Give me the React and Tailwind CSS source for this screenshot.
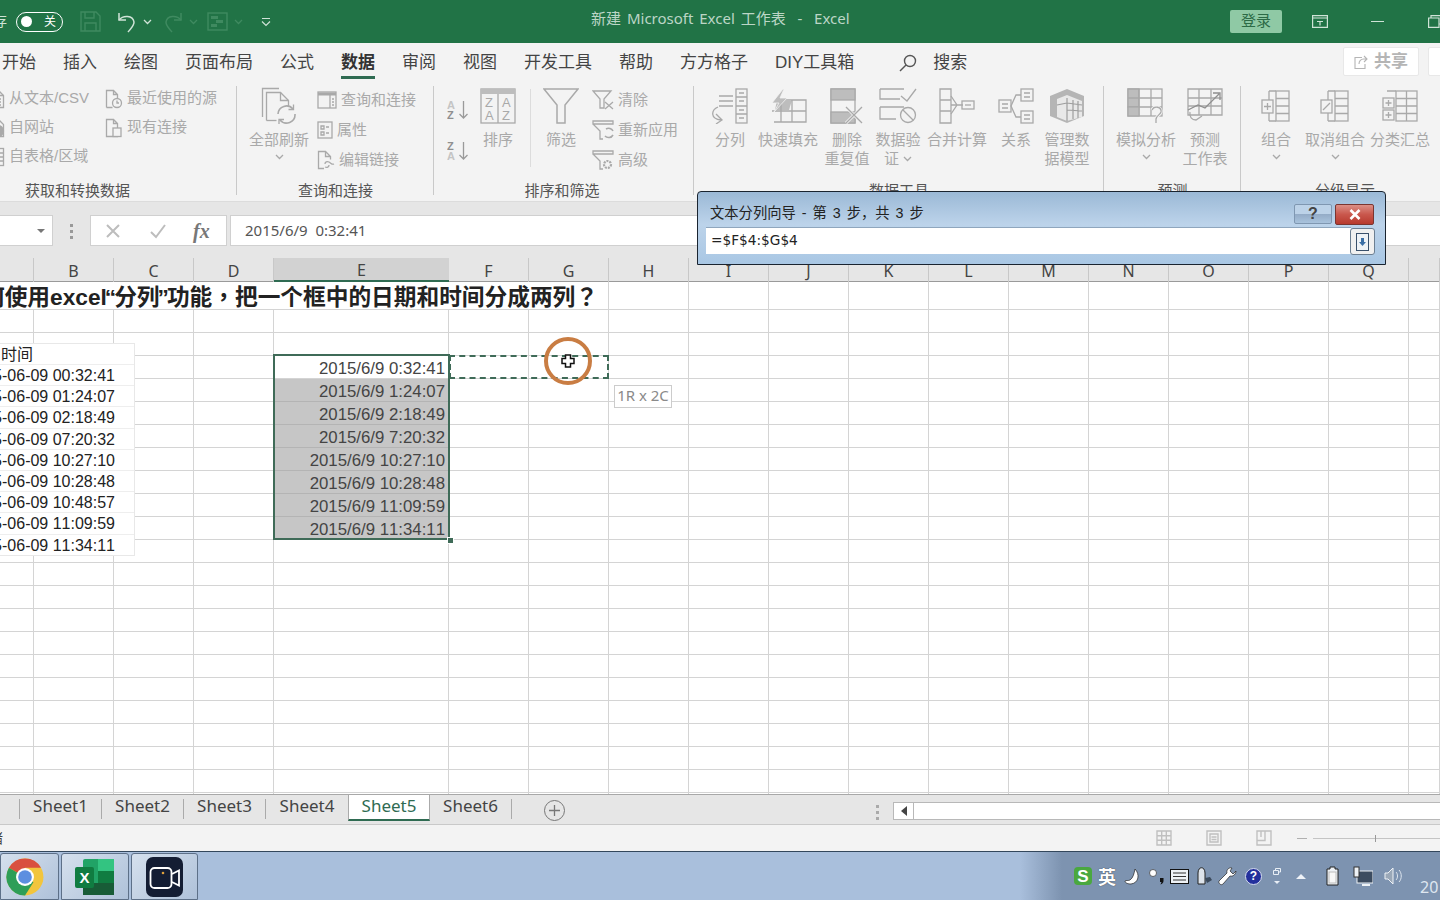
import React from "react";

const G = "#a9a9a9";
const F = "[font-family:'Liberation_Sans','Noto_Sans_CJK_SC',sans-serif]";

const S = ({ w, h, vb, children, className = "", c = G, sw = 1.3 }) => (
  <svg width={w} height={h} viewBox={vb || `0 0 ${w} ${h}`} fill="none" stroke={c} strokeWidth={sw} className={`shrink-0 ${className}`}>
    {children}
  </svg>
);

const Chev = ({ c = "#a9a9a9" }) => (
  <svg width="9" height="6" viewBox="0 0 9 6" fill="none" stroke={c} strokeWidth="1.3" className="shrink-0"><path d="M1 1l3.5 3.5L8 1" /></svg>
);

/* ---------- ribbon icons ---------- */
const I = {
  csv: (
    <S w={16} h={20} className="-ml-[11px]"><path d="M1.500 1.500h8l5 5v12h-13z" /><path d="M9.500 1.500v5h5M6 10h6M6 13h6M6 16h6" /></S>
  ),
  web: (
    <S w={16} h={20} className="-ml-[11px]"><path d="M1.500 1.500h8l5 5v12h-13z" /><circle cx="9" cy="13" r="5.500" fill="#a9a9a9" /></S>
  ),
  tbl: (
    <S w={16} h={20} className="-ml-[11px]"><rect x="1.500" y="1.500" width="13" height="17" /><path d="M1.500 6h13M1.500 10h13M1.500 14h13M8 1.500v17" /></S>
  ),
  recent: (
    <S w={18} h={20}><path d="M1.5 18.5v-17h7l4 4v4M1.5 18.5h6M8.5 1.5v4h4" /><circle cx="12" cy="14" r="4.5" /><path d="M12 11.5V14h2" /></S>
  ),
  existing: (
    <S w={18} h={20}><path d="M1.5 18.5v-17h7l4 4v13zM8.5 1.5v4h4" /><rect x="8" y="10" width="8" height="8.5" fill="#f3f3f3" /></S>
  ),
  refresh: (
    <S w={36} h={38}>
      <path d="M1.5 30V1.5H18" /><path d="M5.5 33.5V5.5h14l8 8v6" /><path d="M19.5 5.5v8h8" /><path d="M5.5 33.5h10" />
      <path d="M17 27a8.5 8.5 0 0 1 15-5M34 27a8.5 8.5 0 0 1-15 6" strokeWidth="1.6" /><path d="M32.5 17.5v5h-5M18 37v-4.500h5" />
    </S>
  ),
  panel: (
    <S w={20} h={18}><rect x="1" y="1" width="18" height="16" /><path d="M1 3h18" strokeWidth="3" /><path d="M13 3v14M15 8h2M15 11h2M15 14h2" /></S>
  ),
  props: (
    <S w={16} h={18}><rect x="1" y="1" width="14" height="16" /><path d="M4 5h3v3H4zM4 11h3v3H4zM9 6h3M9 12h3" /></S>
  ),
  links: (
    <S w={18} h={20}><path d="M7 18.500H1.500v-17h7l5 5v3M8.500 1.500v5h5" /><path d="M8 14c0-2 2-3 4-2s3 3 5 2M8 17c2 1 4 0 4-2" /></S>
  ),
  az: (
    <svg width="22" height="22" viewBox="0 0 22 22" className="shrink-0">
      <text x="0" y="9.500" fontSize="11" fontFamily="Liberation Sans" fontWeight="700" fill="#c4c4c4">A</text>
      <text x="0" y="20" fontSize="11" fontFamily="Liberation Sans" fontWeight="700" fill="#8f8f8f">Z</text>
      <path d="M16.500 2v17M12.500 15l4 4 4-4" fill="none" stroke="#9a9a9a" strokeWidth="1.300" />
    </svg>
  ),
  za: (
    <svg width="22" height="22" viewBox="0 0 22 22" className="shrink-0">
      <text x="0" y="9.500" fontSize="11" fontFamily="Liberation Sans" fontWeight="700" fill="#8f8f8f">Z</text>
      <text x="0" y="20" fontSize="11" fontFamily="Liberation Sans" fontWeight="700" fill="#c4c4c4">A</text>
      <path d="M16.500 2v17M12.500 15l4 4 4-4" fill="none" stroke="#9a9a9a" strokeWidth="1.300" />
    </svg>
  ),
  sort: (
    <svg width="36" height="36" viewBox="0 0 36 36" className="shrink-0">
      <rect x="1" y="1" width="34" height="34" fill="#f3f3f3" stroke="#a9a9a9" strokeWidth="1.300" />
      <rect x="1" y="1" width="34" height="5" fill="#bdbdbd" />
      <path d="M18 6v29" stroke="#a9a9a9" strokeWidth="1.300" />
      <g fontSize="13" fontFamily="Liberation Sans" fill="#a9a9a9">
        <text x="5" y="19">Z</text><text x="5" y="32">A</text><text x="22" y="19">A</text><text x="22" y="32">Z</text>
      </g>
    </svg>
  ),
  funnel: (
    <S w={36} h={36} sw={1.5}><path d="M1 1h34L22 17v18h-8V17z" /></S>
  ),
  fClear: (
    <S w={22} h={20}><path d="M1 1h18l-7 8v9l-4 0V9z" /><path d="M13 12l8 7M21 12l-8 7" /></S>
  ),
  fRe: (
    <S w={22} h={20}><path d="M1 1h20v3H1zM1 4l7 7v8h3" /><path d="M14 9a5 5 0 0 1 7 2M21 15a5 5 0 0 1-8 1" strokeWidth="1.600" /></S>
  ),
  fAdv: (
    <S w={22} h={20}><path d="M1 1h20v3H1zM1 4l7 7v8h3" /><circle cx="15.500" cy="14.500" r="3.500" strokeWidth="2.200" strokeDasharray="2 1" /></S>
  ),
  split: (
    <S w={40} h={36}>
      <path d="M9 8h14M9 13h14M9 18h14" />
      <rect x="26" y="1" width="11" height="34" /><path d="M26 9h11M26 18h11M26 26h11M29 5h5M29 13h5M29 22h5M29 30h5" />
      <path d="M8 19C1 22 0 31 11 32M6 26l6 6-6 4" />
    </S>
  ),
  flash: (
    <svg width="38" height="36" viewBox="0 0 38 36" className="shrink-0" fill="none" stroke="#a9a9a9" strokeWidth="1.300">
      <path d="M8 12h29v22H5" /><path d="M8 12h15l-3 10H6z" fill="#bdbdbd" stroke="none" /><path d="M23 12v22M37 23H3M12 12v22" />
      <path d="M14 1L3 15h7L5 24 18 10h-7l4-9z" fill="#bdbdbd" stroke="#f3f3f3" strokeWidth="0.800" />
    </svg>
  ),
  del: (
    <svg width="34" height="36" viewBox="0 0 34 36" className="shrink-0" fill="none" stroke="#a9a9a9" strokeWidth="1.300">
      <rect x="1" y="1" width="24" height="34" />
      <rect x="1" y="1" width="24" height="11" fill="#bdbdbd" /><rect x="1" y="24" width="24" height="11" fill="#bdbdbd" />
      <path d="M16 19l16 16M32 19L16 35" stroke="#f3f3f3" strokeWidth="3" /><path d="M16 19l16 16M32 19L16 35" />
    </svg>
  ),
  valid: (
    <S w={38} h={36}>
      <path d="M1 1h24M1 1v10h20M1 19h24M1 19v12h16M25 19" />
      <path d="M22 8l6 5 9-12" />
      <circle cx="29" cy="27" r="7.500" /><path d="M24 22l10 10" />
    </S>
  ),
  merge: (
    <S w={36} h={36}>
      <path d="M1 1h11v11H1zM1 12h11v11H1zM1 23h11v12H1z" />
      <path d="M12 8l6 9-6 9M12 17h12" />
      <rect x="23" y="13" width="12" height="8" /><path d="M26 17h6" />
    </S>
  ),
  rel: (
    <S w={36} h={36}>
      <rect x="1" y="12" width="12" height="12" /><path d="M4 16h6M4 20h6" />
      <rect x="23" y="1" width="12" height="12" /><path d="M26 5h6M26 9h6" />
      <rect x="23" y="23" width="12" height="12" /><path d="M26 27h6M26 31h6" />
      <path d="M23 7l-5 0-5 11 5 11h5" />
    </S>
  ),
  model: (
    <svg width="36" height="36" viewBox="0 0 36 36" className="shrink-0" fill="none">
      <path d="M1 8L18 1l17 7v20l-17 7-17-7z" fill="#b5b5b5" />
      <path d="M8 11l10-4 15 6v16l-15 4-10-4z" fill="#e8e8e8" />
      <path d="M18 10v23M24 12v19M29 13v17M18 15l15 2M18 22l15 1M8 17l10-2" stroke="#9d9d9d" strokeWidth="1.200" />
    </svg>
  ),
  whatif: (
    <svg width="38" height="36" viewBox="0 0 38 36" className="shrink-0" fill="none" stroke="#a9a9a9" strokeWidth="1.300">
      <rect x="1" y="1" width="34" height="27" />
      <path d="M1 1h11v18H1z" fill="#bdbdbd" /><path d="M1 10h34M1 19h34M12 1v27M24 1v27" /><rect x="1" y="19" width="11" height="9" fill="#bdbdbd" />
      <path d="M25 22c2-5 10-3 9 2-1 3-4 3-5 7v4" stroke="#f3f3f3" strokeWidth="3" /><path d="M25 22c2-5 10-3 9 2-1 3-4 3-5 7v4" />
    </svg>
  ),
  fore: (
    <S w={36} h={36}>
      <path d="M1 1h34v26H1zM12 1v26M24 1v26M1 10h34M1 18h34" /><path d="M1 22l10-5 7 3 14-14M26 5h7v7" stroke="#8f8f8f" />
      <path d="M3 24c-1 5 2 8 6 8l6-4" />
    </S>
  ),
  grp: (
    <S w={30} h={32}>
      <rect x="15" y="1" width="13" height="30" /><path d="M15 8.500h13M15 16h13M15 23.500h13M8 1h7M8 31h7M8 1v9M8 23v8" />
      <rect x="1" y="10" width="11" height="13" /><path d="M6.500 13v7M3 16.500h7" />
    </S>
  ),
  ungrp: (
    <S w={30} h={32}>
      <rect x="15" y="1" width="13" height="30" /><path d="M15 8.500h13M15 16h13M15 23.500h13M8 1h7M8 31h7M8 1v9M8 23v8" />
      <rect x="1" y="10" width="11" height="13" /><path d="M3 20l7-7" />
    </S>
  ),
  sub: (
    <S w={36} h={32}>
      <rect x="14" y="1" width="21" height="30" /><path d="M14 8.500h21M14 16h21M14 23.500h21M24.500 1v30M5 1h9" />
      <rect x="1" y="8" width="11" height="10" /><path d="M6.500 10v6M3.500 13h6" /><rect x="1" y="20" width="11" height="10" /><path d="M6.500 22v6M3.500 25h6" />
    </S>
  ),
};

const Item = ({ icon, label, h = "h-[29px]" }) => (
  <div className={`flex items-center ${h} text-[15px] text-[#a9a9a9] whitespace-nowrap`}>
    {icon}
    <span className="ml-1">{label}</span>
  </div>
);

const Big = ({ w, icon, lines, chev, chevInline }) => (
  <div className={`flex flex-col items-center shrink-0 ${w}`}>
    <div className="h-[38px] flex items-center justify-center mt-[7px]">{icon}</div>
    <div className="mt-[5px] text-[15px] leading-[19px] text-[#a9a9a9] text-center whitespace-nowrap">
      {lines.map((l, i) => (
        <div key={l} className="flex items-center justify-center gap-1">
          {l}
          {chevInline && i === lines.length - 1 ? <Chev /> : null}
        </div>
      ))}
    </div>
    {chev ? <div className="mt-[5px]"><Chev /></div> : null}
  </div>
);

const Group = ({ w, sep = true, caption, capClass = "text-center", children, pl = "" }) => (
  <div className={`${w} h-full shrink-0 flex flex-col relative`}>
    <div className={`flex-1 flex min-h-0 ${pl}`}>{children}</div>
    <div className={`h-[21px] text-[15px] leading-[22px] text-[#555] whitespace-nowrap ${capClass}`}>{caption}</div>
    {sep ? <div className="absolute right-0 top-[6px] bottom-[6px] w-px bg-[#c9c9c9]" /> : null}
  </div>
);

const Ribbon = () => (
  <div className="h-[122px] bg-[#f3f3f3] border-b border-[#dcdcdc] flex shrink-0 overflow-hidden">
    <Group w="w-[237px]" caption="获取和转换数据" capClass="pl-[25px]">
      <div className="flex flex-col w-[105px] pt-[4px]">
        <Item icon={I.csv} label="从文本/CSV" />
        <Item icon={I.web} label="自网站" />
        <Item icon={I.tbl} label="自表格/区域" />
      </div>
      <div className="flex flex-col pt-[4px]">
        <Item icon={I.recent} label="最近使用的源" />
        <Item icon={I.existing} label="现有连接" />
      </div>
    </Group>
    <Group w="w-[197px]" caption="查询和连接">
      <Big w="w-[84px] -mr-[4px]" icon={I.refresh} lines={["全部刷新"]} chev />
      <div className="flex flex-col pt-[5px]">
        <Item h="h-[30px]" icon={I.panel} label="查询和连接" />
        <Item h="h-[30px]" icon={I.props} label="属性" />
        <Item h="h-[30px]" icon={I.links} label="编辑链接" />
      </div>
    </Group>
    <Group w="w-[260px]" caption="排序和筛选" capClass="text-center pr-[4px]">
      <div className="flex flex-col gap-[19px] pl-[13px] pt-[19px] w-[46px]">
        {I.az}
        {I.za}
      </div>
      <Big w="w-[36px]" icon={I.sort} lines={["排序"]} />
      <div className="w-px h-[78px] bg-[#dcdcdc] ml-[14px] mt-[9px]" />
      <Big w="w-[60px]" icon={I.funnel} lines={["筛选"]} />
      <div className="flex flex-col pt-[5px] pl-[1px]">
        <Item h="h-[30px]" icon={I.fClear} label="清除" />
        <Item h="h-[30px]" icon={I.fRe} label="重新应用" />
        <Item h="h-[30px]" icon={I.fAdv} label="高级" />
      </div>
    </Group>
    <Group w="w-[410px]" caption="数据工具" pl="pl-[12px]">
      <Big w="w-[48px]" icon={I.split} lines={["分列"]} />
      <Big w="w-[68px]" icon={I.flash} lines={["快速填充"]} />
      <Big w="w-[50px]" icon={I.del} lines={["删除", "重复值"]} />
      <Big w="w-[52px]" icon={I.valid} lines={["数据验", "证"]} chevInline />
      <Big w="w-[66px]" icon={I.merge} lines={["合并计算"]} />
      <Big w="w-[52px]" icon={I.rel} lines={["关系"]} />
      <Big w="w-[50px]" icon={I.model} lines={["管理数", "据模型"]} />
    </Group>
    <Group w="w-[137px]" caption="预测" pl="pl-[7px]">
      <Big w="w-[70px]" icon={I.whatif} lines={["模拟分析"]} chev />
      <Big w="w-[48px]" icon={I.fore} lines={["预测", "工作表"]} />
    </Group>
    <Group w="w-[208px]" sep={false} caption="分级显示" pl="pl-[6px]">
      <Big w="w-[58px]" icon={I.grp} lines={["组合"]} chev />
      <Big w="w-[60px]" icon={I.ungrp} lines={["取消组合"]} chev />
      <Big w="w-[70px]" icon={I.sub} lines={["分类汇总"]} />
    </Group>
  </div>
);

/* ---------- title bar ---------- */
const Q = "#3f8a60";
const TitleBar = () => (
  <div className="h-[43px] bg-[#217346] flex items-center shrink-0 text-white overflow-hidden relative">
    <span className="text-[14px] w-[16px] -ml-[7px] shrink-0 text-[#cfe3d7]">存</span>
    <div className="ml-[7px] w-[47px] h-[20px] rounded-full border border-white flex items-center justify-between px-[3px] shrink-0">
      <span className="w-[11px] h-[11px] rounded-full bg-white ml-[1px]" />
      <span className="text-[12px] leading-none mr-[3px]">关</span>
    </div>
    <S w={21} h={21} c={Q} sw={1.4} className="ml-[17px]"><path d="M1 1h15l4 4v15H1z" /><path d="M5 1v6h9V1M5 20v-8h11v8" /></S>
    <S w={20} h={22} c="#cfe3d7" sw={1.5} className="ml-[16px]"><path d="M2 2v7h7" /><path d="M2 9c4-5 14-5 15 2 0 4-3 6-6 10" /></S>
    <span className="ml-[6px]"><Chev c="#cfe3d7" /></span>
    <S w={20} h={22} c={Q} sw={1.5} className="ml-[11px] -scale-x-100"><path d="M2 2v7h7" /><path d="M2 9c4-5 14-5 15 2 0 4-3 6-6 10" /></S>
    <span className="ml-[6px]"><Chev c={Q} /></span>
    <svg width="21" height="19" viewBox="0 0 21 19" className="ml-[9px] shrink-0"><rect x="1" y="1" width="19" height="17" fill="none" stroke={Q} strokeWidth="1.400" /><path d="M4 4h7v3H4zM9 8h7v3H9zM4 12h6v3H4z" fill={Q} /></svg>
    <span className="ml-[6px]"><Chev c={Q} /></span>
    <svg width="10" height="10" viewBox="0 0 10 10" fill="none" stroke="#cfe3d7" strokeWidth="1.200" className="ml-[18px] shrink-0"><path d="M1 1.500h8M1 4.500l4 4 4-4" /></svg>
    <div className="absolute left-[591px] top-[8px] text-[15px] leading-[20px] [word-spacing:2px] text-[#bcd6c6] whitespace-pre [font-family:'Noto_Sans','Noto_Sans_CJK_SC',sans-serif]">新建 Microsoft Excel 工作表  -  Excel</div>
    <div className="ml-auto flex items-center shrink-0 -mr-[4px]">
      <div className="w-[52px] h-[23px] rounded-[2px] bg-[#8fc9a5] text-[#2c6a46] text-[15px] flex items-center justify-center">登录</div>
      <S w={16} h={13} c="#cfe3d7" sw={1.2} className="ml-[30px]"><path d="M.6.6h14.800v11.800H.6zM.6 3h14.800M5 6.500h6M8 6.500v4" /></S>
      <div className="w-[13px] h-px bg-[#cfe3d7] ml-[43px]" />
      <S w={16} h={13} c="#cfe3d7" sw={1.2} className="ml-[44px]"><path d="M3 3V.6h10.400V9H11M.6 3h10.400v9.400H.6z" /></S>
    </div>
  </div>
);

/* ---------- tabs ---------- */
const TabRow = () => (
  <div className="h-[37px] bg-[#f3f3f3] flex items-center shrink-0 pl-[2px] pt-[2px] gap-[27px] text-[17px] text-[#444] whitespace-nowrap">
    {["开始", "插入", "绘图", "页面布局", "公式"].map((t) => <span key={t}>{t}</span>)}
    <span className="relative font-bold text-[#333]">
      数据
      <span className="absolute left-0 right-0 -bottom-[4px] h-[3px] bg-[#2f6b52]" />
    </span>
    {["审阅", "视图", "开发工具", "帮助", "方方格子", "DIY工具箱"].map((t) => <span key={t}>{t}</span>)}
    <S w={18} h={18} c="#555" sw={1.4} className="ml-[18px]"><circle cx="11" cy="7" r="5.500" /><path d="M7 11l-6 6" /></S>
    <span className="-ml-[11px]">搜索</span>
    <div className="ml-auto flex items-center gap-[9px] -mr-[8px] -mt-[2px]">
      <div className="w-[76px] h-[29px] bg-white border border-[#e8e8e8] rounded-[2px] flex items-center justify-center gap-[6px] text-[#b5b5b5] font-bold text-[17px]">
        <S w={14} h={14} c="#b5b5b5" sw={1.1}><path d="M8 2.500h-7v11h10V9M5 9c0-3 2-5 4.500-5H13M10 1l3 3-3 3" /></S>
        共享
      </div>
      <div className="w-[20px] h-[29px] bg-white border border-[#e8e8e8] rounded-[2px]" />
    </div>
  </div>
);

/* ---------- formula bar ---------- */
const FormulaBar = () => (
  <div className="h-[56px] bg-[#e6e6e6] flex items-start pt-[13px] shrink-0">
    <div className="w-[53px] h-[31px] bg-white border border-[#d0d0d0] border-l-0 flex items-center justify-end pr-[7px]">
      <span className="w-0 h-0 border-x-[4px] border-x-transparent border-t-[4px] border-t-[#777]" />
    </div>
    <div className="w-[37px] flex flex-col items-center gap-[3px] pt-[9px]">
      <span className="w-[3px] h-[3px] bg-[#999]" /><span className="w-[3px] h-[3px] bg-[#999]" /><span className="w-[3px] h-[3px] bg-[#999]" />
    </div>
    <div className="w-[137px] h-[31px] bg-white border border-[#d0d0d0] flex items-center pl-[14px]">
      <S w={16} h={16} c="#bdbdbd" sw={2}><path d="M2 2l12 12M14 2L2 14" /></S>
      <S w={18} h={16} c="#bdbdbd" sw={2} className="ml-[28px]"><path d="M2 9l5 5L16 2" /></S>
      <span className="ml-[26px] text-[20px] italic font-bold text-[#777] [font-family:'Liberation_Serif',serif] leading-none">fx</span>
    </div>
    <div className="ml-[3px] flex-1 h-[31px] bg-white border border-[#d0d0d0] border-r-0 flex items-center pl-[14px] text-[15px] text-[#555] whitespace-pre [font-family:'Noto_Sans',sans-serif]">2015/6/9  0:32:41</div>
  </div>
);

/* ---------- sheet ---------- */
const colsClass = "grid grid-cols-[34px_80px_80px_80px_175px_repeat(12,80px)_31px]";
const letters = ["", "B", "C", "D", "E", "F", "G", "H", "I", "J", "K", "L", "M", "N", "O", "P", "Q", ""];

const ColHeader = () => (
  <div className={`${colsClass} h-[24px] bg-[#e6e6e6] border-b border-[#9a9a9a] shrink-0`}>
    {letters.map((l, i) => (
      <div
        key={i}
        className={`h-[24px] flex items-center justify-center pt-[2px] text-[16px] text-[#444] [font-family:'Noto_Sans',sans-serif] ${
          l === "E" ? "bg-[#d2d2d2] border-b-2 border-[#2f6b52]" : "border-r border-[#c8c8c8]"
        }`}
      >
        {l}
      </div>
    ))}
  </div>
);

const dates = ["0:32:41", "1:24:07", "2:18:49", "7:20:32", "10:27:10", "10:28:48", "11:09:59", "11:34:11"];
const picture = [
  "00:32:41", "01:24:07", "02:18:49", "07:20:32", "10:27:10", "10:28:48", "10:48:57", "11:09:59", "11:34:11",
];
const TC = "[font-family:'Noto_Sans_CJK_TC',sans-serif]";

const Sheet = () => (
  <div className="h-[513px] relative overflow-hidden bg-white shrink-0">
    {/* title row */}
    <div className="h-[28px] flex border-b border-[#d4d4d4]">
      <div className="w-[609px] shrink-0 border-r border-[#d4d4d4] relative overflow-hidden">
        <div className={`absolute -left-[18px] top-0 h-[27px] leading-[27px] text-[22.700px] font-bold text-[#222] whitespace-nowrap ${F}`}>
          何使用excel<span className="-mx-[2px]">“</span>分列<span className="-mx-[2px]">”</span>功能<span className={TC}>，</span>把一个框中的日期和时间分成两列<span className={TC}>？</span>
        </div>
      </div>
      {Array.from({ length: 11 }).map((_, i) => (
        <div key={i} className={`${i === 10 ? "w-[31px]" : "w-[80px]"} border-r border-[#d4d4d4] shrink-0`} />
      ))}
    </div>
    {Array.from({ length: 22 }).map((_, r) => {
      const d = r >= 2 && r < 10 ? dates[r - 2] : null;
      return (
        <div key={r} className={`${colsClass} h-[23px]`}>
          {letters.map((l, c) => (
            <div
              key={c}
              className={`h-[23px] border-r border-b border-[#d4d4d4] ${
                c === 4 && d
                  ? `text-right pr-[3px] text-[16.800px] leading-[26px] text-[#444] whitespace-nowrap [font-kerning:none] ${F} ${r > 2 ? "bg-[#c6c6c6] border-b-[#b4b4b4]" : ""}`
                  : ""
              }`}
            >
              {c === 4 && d ? `2015/6/9 ${d}` : null}
            </div>
          ))}
        </div>
      );
    })}

    {/* pasted picture */}
    <div className={`absolute left-0 top-[61px] w-[135px] h-[213px] bg-white border border-l-0 border-[#e8e8e8] text-[#222] [font-kerning:none] ${F}`}>
      <div className="h-[21px] text-[16px] leading-[22px] pl-[1px] border-b border-[#eeeeee]">时间</div>
      {picture.map((t) => (
        <div key={t} className="h-[21.200px] border-b border-[#eeeeee] flex justify-end pr-[19px] overflow-hidden text-[16px] leading-[21px] whitespace-nowrap last:border-b-0">
          <span className="shrink-0">2015-06-09 {t}</span>
        </div>
      ))}
    </div>

    {/* selection */}
    <div className="absolute left-[273px] top-[72px] w-[177px] h-[186px] border-2 border-[#3f6b58]" />
    <div className="absolute left-[447px] top-[255px] w-[5px] h-[5px] bg-[#3f6b58] border border-white box-content" />
    {/* marching ants */}
    <div className="absolute left-[449px] top-[73px] w-[160px] h-[24px] border-2 border-dashed border-[#3f6b58]" />
    {/* pointer ring */}
    <div className="absolute left-[544px] top-[55px] w-[48px] h-[48px] rounded-full border-[4px] border-[#c97d43]" />
    <svg width="14" height="14" viewBox="0 0 14 14" className="absolute left-[561px] top-[72px]">
      <path d="M4.500 1h5v3.500H13v5H9.500V13h-5V9.500H1v-5h3.500z" fill="#fff" stroke="#111" strokeWidth="1.500" />
    </svg>
    {/* size tip */}
    <div className="absolute left-[614px] top-[103px] w-[58px] h-[23px] bg-white border border-[#cccccc] text-[15px] leading-[19px] text-center text-[#8a8a8a] [font-family:'Noto_Sans',sans-serif]">1R x 2C</div>
    <div className="absolute left-0 right-0 bottom-0 h-px bg-[#a8a8a8]" />
  </div>
);

/* ---------- dialog ---------- */
const Dialog = () => (
  <div className="absolute left-[697px] top-[191px] w-[689px] h-[74px] rounded-t-[4px] border border-[#1a2430] bg-[linear-gradient(#9bb9d6,#bcd3ea_45%,#a9c7e4)] z-10">
    <div className="h-[36px] flex items-center pl-[12px] pr-[11px] pt-[8px]">
      <span className={`text-[14.300px] [word-spacing:2px] text-[#222] ${F} whitespace-pre`}>文本分列向导 - 第 3 步，共 3 步</span>
      <div className="ml-auto w-[38px] h-[20px] rounded-[2px] border border-[#7f97b1] bg-[linear-gradient(#bcd2e8_50%,#93abc6_50%,#a9c3dd)] flex items-center justify-center text-[#444] font-bold text-[16px] [font-family:'Liberation_Sans',sans-serif]">?</div>
      <div className="ml-[3px] w-[39px] h-[21px] rounded-[2px] border border-[#7a3530] bg-[linear-gradient(#dc8f86,#c9574c_50%,#b73a2e)] flex items-center justify-center">
        <svg width="12" height="11" viewBox="0 0 12 11" fill="none" stroke="#fff" strokeWidth="2.600"><path d="M1.500 1l9 9M10.500 1l-9 9" /></svg>
      </div>
    </div>
    <div className="flex h-[27px] ml-[8px] mr-[9px] items-start">
      <div className="w-[645px] h-[27px] bg-white border-t border-[#8fa6bd] flex items-center pl-[5px] pb-[2px] text-[13.700px] text-[#222] [font-family:'DejaVu_Sans',sans-serif] -mt-px">=$F$4:$G$4</div>
      <div className="w-[25px] h-[27px] ml-[-1px] bg-[#f0f0f0] border border-[#6c7f92] rounded-[3px] flex items-center justify-center">
        <svg width="13" height="18" viewBox="0 0 13 18"><rect x=".5" y=".5" width="12" height="17" fill="#eef2f6" stroke="#39506b" /><path d="M5 5h3v4h2l-3.500 4L3 9h2z" fill="#3a6ea5" /></svg>
      </div>
    </div>
  </div>
);

/* ---------- sheet tabs ---------- */
const SheetTabs = () => (
  <div className="h-[30px] bg-[#e6e6e6] border-b border-[#c9c9c9] flex shrink-0 relative text-[17px] text-[#444] [font-family:'Noto_Sans',sans-serif]">
    <div className="w-[20px] shrink-0 border-r border-[#aaaaaa] h-[20px] mt-[4px]" />
    {["Sheet1", "Sheet2", "Sheet3", "Sheet4"].map((s, i) => (
      <div key={s} className={`w-[82px] h-[20px] mt-[4px] flex items-center justify-center pb-[6px] shrink-0 ${i < 3 ? "border-r border-[#aaaaaa]" : ""}`}>
        {s}
      </div>
    ))}
    <div className="w-[82px] h-[26px] bg-white border-x border-[#aaaaaa] border-b-2 border-b-[#2f6b52] flex items-center justify-center shrink-0 text-[#2f6b52] pb-[3px]">Sheet5</div>
    <div className="w-[82px] h-[20px] mt-[4px] flex items-center justify-center pb-[6px] shrink-0 border-r border-[#aaaaaa]">Sheet6</div>
    <div className="ml-[32px] mt-[5px] w-[21px] h-[21px] rounded-full border border-[#777] flex items-center justify-center shrink-0">
      <svg width="11" height="11" viewBox="0 0 11 11" stroke="#777" strokeWidth="1.300"><path d="M5.500 0v11M0 5.500h11" /></svg>
    </div>
    <div className="ml-[311px] mt-[10px] flex flex-col gap-[3px] shrink-0">
      <span className="w-[3px] h-[3px] bg-[#aaa]" /><span className="w-[3px] h-[3px] bg-[#aaa]" /><span className="w-[3px] h-[3px] bg-[#aaa]" />
    </div>
    <div className="ml-[14px] mt-[7px] flex-1 h-[18px] bg-white border-y border-l border-[#b8b8b8] flex">
      <div className="w-[20px] border-r border-[#b8b8b8] flex items-center justify-center">
        <span className="w-0 h-0 border-y-[5px] border-y-transparent border-r-[6px] border-r-[#444]" />
      </div>
    </div>
  </div>
);

/* ---------- status bar ---------- */
const StatusBar = () => (
  <div className="h-[27px] bg-[#f3f3f3] border-b border-[#33475c] flex items-center shrink-0 overflow-hidden">
    <span className={`-ml-[11px] text-[14px] text-[#444] ${F}`}>绪</span>
    <S w={16} h={16} c="#c0c0c0" sw={1.4} className="ml-[1153px]"><path d="M1 1h14v14H1zM5.700 1v14M10.300 1v14M1 5.700h14M1 10.300h14" /></S>
    <S w={16} h={16} c="#c0c0c0" sw={1.4} className="ml-[34px]"><path d="M1 1h14v14H1zM4 4h8v8H4zM5.500 7h5M5.500 9.500h5" /></S>
    <S w={16} h={16} c="#c0c0c0" sw={1.4} className="ml-[34px]"><path d="M1 1h14v14H1zM1 10.500h8V1M5 1v6" /></S>
    <div className="ml-[25px] w-[10px] h-px bg-[#b0b0b0] shrink-0" />
    <div className="ml-[6px] flex-1 h-px bg-[#c4c4c4] relative">
      <span className="absolute left-[62px] -top-[3px] w-px h-[7px] bg-[#999]" />
    </div>
  </div>
);

/* ---------- task bar ---------- */
const TBtn = ({ w, children, ml = "" }) => (
  <div className={`${w} ${ml} h-[47px] rounded-t-[3px] border border-[#5d7088] bg-[linear-gradient(135deg,#d5e0ed,#aec1d9)] flex items-center justify-center shrink-0`}>{children}</div>
);

const Chrome = () => (
  <svg width="38" height="38" viewBox="0 0 36 36">
    <circle cx="18" cy="18" r="17.500" fill="#f2c53d" />
    <path d="M18 18L2.800 9.200A17.500 17.500 0 0 1 33.200 9.200H18z" fill="#d9503f" />
    <path d="M18 18L2.800 9.200A17.500 17.500 0 0 0 18 35.500L26 23z" fill="#2e9e58" />
    <circle cx="18" cy="18" r="8.500" fill="#fff" />
    <circle cx="18" cy="18" r="6.500" fill="#5c8fe0" />
  </svg>
);

const ExcelLogo = () => (
  <svg width="40" height="38" viewBox="0 0 40 38">
    <rect x="8" y="1" width="31" height="36" rx="2" fill="#21a366" />
    <rect x="23" y="1" width="16" height="12" fill="#33c481" />
    <rect x="23" y="13" width="16" height="12" fill="#107c41" />
    <rect x="8" y="25" width="31" height="12" fill="#185c37" />
    <rect x="0" y="9" width="19" height="21" rx="2" fill="#107c41" />
    <text x="9.500" y="25" fontSize="15" fontWeight="700" fontFamily="Liberation Sans" fill="#fff" textAnchor="middle">X</text>
  </svg>
);

const Recorder = () => (
  <svg width="37" height="40" viewBox="0 0 37 40">
    <rect width="37" height="40" rx="7" fill="#141d33" />
    <rect x="4.500" y="11" width="21" height="20" rx="4" fill="none" stroke="#fff" strokeWidth="1.800" />
    <path d="M26 17l7-3.500v15L26 25" fill="none" stroke="#fff" strokeWidth="1.800" />
    <circle cx="17" cy="16" r="1.300" fill="#e0a13c" />
  </svg>
);

const Tray = () => (
  <div className="ml-auto w-[420px] h-full bg-[linear-gradient(90deg,#a9bfdc,#7d93b0_10%,#7d93b0)] flex items-center pl-[54px] shrink-0 overflow-hidden relative">
    <div className="w-[18px] h-[18px] rounded-[4px] bg-[#4aa83f] flex items-center justify-center text-white font-bold text-[17px] leading-none shrink-0 [font-family:'Liberation_Sans',sans-serif]">S</div>
    <span className="ml-[6px] text-[18px] leading-none font-bold text-white [text-shadow:0_0_1px_#222] [font-family:'Noto_Sans_CJK_SC',sans-serif]">英</span>
    <svg width="16" height="17" viewBox="0 0 16 17" className="ml-[8px] shrink-0"><path d="M11 1c5 5 4 14-4 15-3 0-6-1-6-3 1-1 3 0 5-1 3-2 4-6 5-11z" fill="#fff" stroke="#222" strokeWidth=".7" /></svg>
    <svg width="17" height="17" viewBox="0 0 17 17" className="ml-[8px] shrink-0"><circle cx="5" cy="5" r="3.500" fill="#fff" stroke="#333" strokeWidth=".7" /><path d="M12 10h3.500v3c0 2-1.500 3-3 3.500l1-2.500H12z" fill="#111" /></svg>
    <svg width="19" height="15" viewBox="0 0 19 15" className="ml-[5px] shrink-0"><rect x=".5" y=".5" width="18" height="14" fill="#eef2f6" stroke="#111" /><path d="M3 4h13M3 7.500h13M3 11h13" stroke="#333" /></svg>
    <svg width="20" height="20" viewBox="0 0 20 20" className="ml-[5px] shrink-0"><path d="M4 7c0-7 7-7 7 0v11H4z" fill="#dde3ea" stroke="#222" /><path d="M11 12l5-1 2 3-5 3z" fill="#3b4a5c" /></svg>
    <svg width="19" height="19" viewBox="0 0 19 19" className="ml-[4px] shrink-0"><path d="M18 4l-3 3-3-3 2-3c-3-1-6 2-5 5L1 14c-1 2 2 5 4 3l7-8c3 1 6-2 6-5z" fill="#fff" stroke="#222" strokeWidth=".7" /></svg>
    <div className="ml-[8px] w-[17px] h-[17px] rounded-full bg-[#23309c] border border-[#d6dcf0] text-white font-bold text-[12px] leading-[15px] text-center shrink-0 [font-family:'Liberation_Sans',sans-serif]">?</div>
    <div className="ml-[11px] flex flex-col items-center gap-[6px] shrink-0">
      <svg width="8" height="7" viewBox="0 0 8 7" fill="none" stroke="#e8eef5" strokeWidth="1"><path d="M2.500 2V.5h5v3.500H6M.5 2.500h5v4h-5z" /></svg>
      <span className="w-0 h-0 border-x-[3px] border-x-transparent border-t-[3px] border-t-[#e8eef5]" />
    </div>
    <span className="ml-[15px] w-0 h-0 border-x-[5px] border-x-transparent border-b-[5px] border-b-[#eef2f7] shrink-0" />
    <svg width="13" height="20" viewBox="0 0 13 20" className="ml-[20px] shrink-0"><path d="M4 1h5v2h3v16H1V3h3z" fill="#eef2f6" stroke="#222" /><rect x="3" y="6" width="7" height="11" fill="#f7f7f7" stroke="#bbb" /></svg>
    <svg width="20" height="20" viewBox="0 0 20 20" className="ml-[14px] shrink-0"><rect x="4" y="5" width="16" height="12" fill="#3c4c60" stroke="#eef2f6" /><rect x="1" y="1" width="5" height="10" fill="#eef2f6" stroke="#333" /><path d="M9 19h8" stroke="#eef2f6" strokeWidth="2" /></svg>
    <svg width="20" height="18" viewBox="0 0 20 18" className="ml-[11px] shrink-0" fill="none"><path d="M1 6h3l5-5v16l-5-5H1z" fill="#9aa8b8" stroke="#eef2f6" /><path d="M12 5c2 2 2 6 0 8M15 3c3 3 3 9 0 12" stroke="#dde5ee" /></svg>
    <span className="absolute left-[400px] top-[25px] text-[16px] leading-[20px] text-[#dfe7f0] [font-family:'Noto_Sans',sans-serif]">20</span>
  </div>
);

const TaskBar = () => (
  <div className="h-[48px] bg-[#a9bfdc] flex items-end shrink-0 overflow-hidden">
    <TBtn w="w-[59px]"><span className="-ml-[10px] flex"><Chrome /></span></TBtn>
    <TBtn w="w-[68px]" ml="ml-[2px]"><ExcelLogo /></TBtn>
    <TBtn w="w-[67px]" ml="ml-[2px]"><Recorder /></TBtn>
    <Tray />
  </div>
);

export default function App() {
  return (
    <div className={`w-[1440px] h-[900px] overflow-hidden relative flex flex-col bg-white ${F}`}>
      <TitleBar />
      <TabRow />
      <Ribbon />
      <FormulaBar />
      <ColHeader />
      <Sheet />
      <SheetTabs />
      <StatusBar />
      <TaskBar />
      <Dialog />
    </div>
  );
}
